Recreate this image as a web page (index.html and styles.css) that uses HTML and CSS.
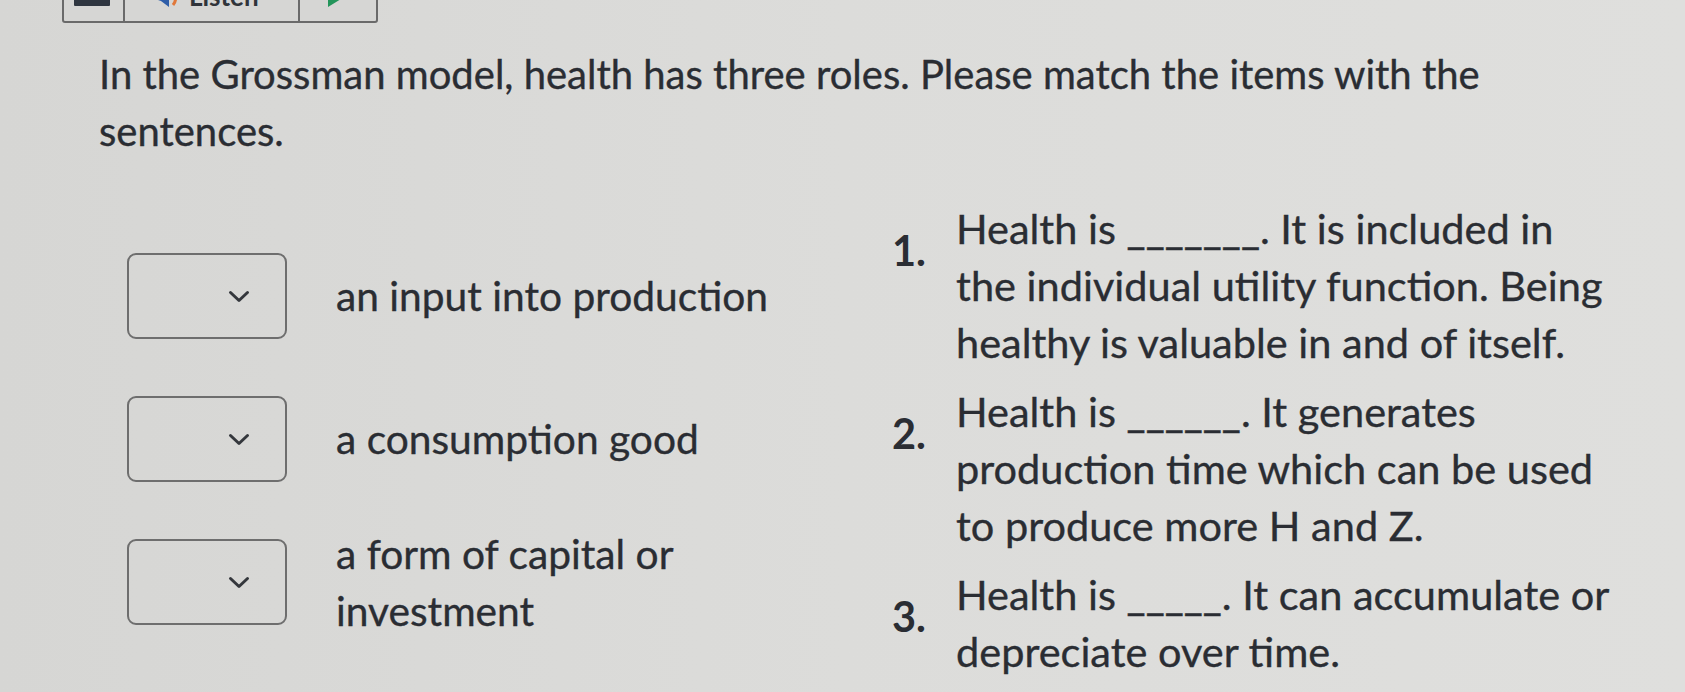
FILE: index.html
```html
<!DOCTYPE html>
<html lang="en">
<head>
<meta charset="utf-8">
<title>Grossman model matching</title>
<link rel="stylesheet" href="styles.css">
</head>
<body>
<div class="page">
  <div class="toolbar">
    <div class="tool tool-first">
      <svg class="tool-icon" width="36" height="10" viewBox="0 0 36 10"><rect x="0" y="0" width="36" height="7" rx="1" fill="#2f3640"/></svg>
    </div>
    <div class="tool tool-listen">
      <svg class="tool-icon" width="34" height="12" viewBox="0 0 34 12"><path d="M2 0 L14 0 L22 -8 L22 10 L14 4 Z" fill="#2f5ea8"/><path d="M26 -4 Q31 2 26 8" stroke="#e0783a" stroke-width="3" fill="none"/></svg>
      <span class="listen-text">Listen</span>
    </div>
    <div class="tool tool-play">
      <svg class="tool-icon" width="14" height="10" viewBox="0 0 14 10"><path d="M0 -8 L13 0 L0 8 Z" fill="#23955a"/></svg>
    </div>
  </div>

  <p class="prompt">In the Grossman model, health has three roles. Please match the items with the<br>sentences.</p>

  <div class="match">
    <div class="answers">
      <div class="answer-row">
        <div class="select"><svg class="chev" width="22" height="13" viewBox="0 0 22 13"><path d="M2.5 2.5 L11 10.5 L19.5 2.5" stroke="#34373c" stroke-width="3" fill="none" stroke-linecap="round" stroke-linejoin="round"/></svg></div>
        <div class="answer-text">an input into production</div>
      </div>
      <div class="answer-row">
        <div class="select"><svg class="chev" width="22" height="13" viewBox="0 0 22 13"><path d="M2.5 2.5 L11 10.5 L19.5 2.5" stroke="#34373c" stroke-width="3" fill="none" stroke-linecap="round" stroke-linejoin="round"/></svg></div>
        <div class="answer-text">a consumption good</div>
      </div>
      <div class="answer-row">
        <div class="select"><svg class="chev" width="22" height="13" viewBox="0 0 22 13"><path d="M2.5 2.5 L11 10.5 L19.5 2.5" stroke="#34373c" stroke-width="3" fill="none" stroke-linecap="round" stroke-linejoin="round"/></svg></div>
        <div class="answer-text">a form of capital or<br>investment</div>
      </div>
    </div>

    <ol class="sentences">
      <li class="sentence"><span class="num">1.</span><span class="sent-text">Health is _______. It is included in<br>the individual utility function. Being<br>healthy is valuable in and of itself.</span></li>
      <li class="sentence"><span class="num">2.</span><span class="sent-text">Health is ______. It generates<br>production time which can be used<br>to produce more H and Z.</span></li>
      <li class="sentence"><span class="num">3.</span><span class="sent-text">Health is _____. It can accumulate or<br>depreciate over time.</span></li>
    </ol>
  </div>
</div>
</body>
</html>
```

FILE: styles.css
```css
html, body {
  margin: 0;
  padding: 0;
}

body {
  background: linear-gradient(90deg, #d6d6d4 0%, #dcdcda 50%, #dfdfdd 100%);
  font-family: Lato, "Open Sans", sans-serif;
  color: #2a2d33;
  width: 1685px;
  height: 692px;
  overflow: hidden;
  -webkit-text-stroke: 0.35px #2a2d33;
}

.page {
  padding-left: 62px;
}

.toolbar {
  display: flex;
  width: 312px;
  height: 38px;
  margin-top: -19px;
  border: 2px solid #6a6a6a;
  border-radius: 0 0 3px 3px;
  background: #d6d6d4;
  overflow: hidden;
  -webkit-text-stroke: 0;
}

.tool {
  display: flex;
  align-items: flex-end;
  padding-bottom: 12px;
  box-sizing: border-box;
  height: 100%;
  overflow: hidden;
}

.tool-first {
  width: 61px;
  padding-left: 10px;
  border-right: 2px solid #6a6a6a;
}

.tool-listen {
  width: 175px;
  padding-left: 22px;
  border-right: 2px solid #6a6a6a;
  gap: 8px;
}

.tool-play {
  flex: 1;
  padding-left: 28px;
}

.tool-icon {
  display: block;
  overflow: visible;
}

.listen-text {
  font-size: 26px;
  line-height: 20px;
  font-weight: 700;
  color: #30343a;
  margin-bottom: 3px;
}

.prompt {
  margin: 23px 0 0 37px;
  font-size: 40px;
  line-height: 57px;
  white-space: nowrap;
}

.match {
  display: flex;
  align-items: flex-start;
  margin-top: 43px;
}

.answers {
  display: grid;
  grid-auto-rows: 143px;
  align-items: center;
  margin-left: 65px;
  margin-top: 21px;
  width: 765px;
}

.answer-row {
  display: flex;
  align-items: center;
  gap: 49px;
}

.select {
  width: 160px;
  height: 86px;
  box-sizing: border-box;
  border: 2px solid #6e6e6e;
  border-radius: 9px;
  display: flex;
  align-items: center;
  justify-content: flex-end;
  padding-right: 35px;
  padding-top: 2px;
}

.chev {
  display: block;
}

.answer-text {
  font-size: 40.7px;
  line-height: 57px;
  white-space: nowrap;
}

.sentences {
  list-style: none;
  margin: -3px 0 0 0;
  padding: 0;
  display: flex;
  flex-direction: column;
  gap: 12px;
}

.sentence {
  display: flex;
  align-items: flex-start;
  font-size: 41.5px;
  line-height: 57px;
}

.num {
  width: 64px;
  padding-top: 22px;
  flex-shrink: 0;
  font-weight: 700;
  -webkit-text-stroke: 0;
}

.sent-text {
  white-space: nowrap;
}
```
